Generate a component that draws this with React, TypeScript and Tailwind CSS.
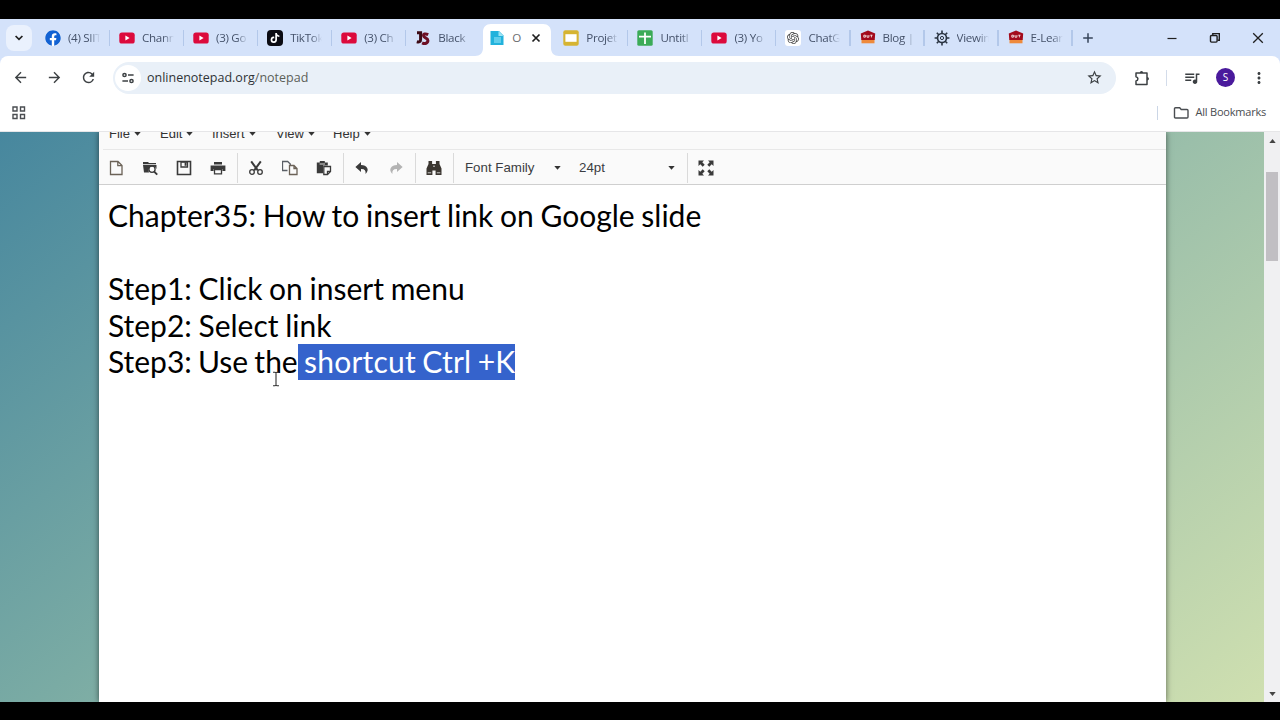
import React from "react";
import { FaFacebook, FaTiktok } from "react-icons/fa";
import { SiOpenai } from "react-icons/si";
import {
  MdArrowBack,
  MdArrowForward,
  MdMoreVert,
  MdQueueMusic,
  MdRefresh,
  MdStarBorder,
} from "react-icons/md";

const YouTube = () => (
  <svg width="16" height="16" viewBox="0 0 16 16">
    <rect x="0.3" y="2.6" width="15.4" height="11" rx="2.6" fill="#dc0a3c" />
    <path d="M6.4 5.6v5L10.6 8.1z" fill="#fff" />
  </svg>
);

const Facebook = () => (
  <span className="flex rounded-full bg-white">
    <FaFacebook size={16} color="#1262d3" />
  </span>
);

const TikTok = () => (
  <span className="flex size-4 items-center justify-center rounded-[4px] bg-[#0b0b12]">
    <FaTiktok size={10} color="#fff" />
  </span>
);

const Js = () => (
  <svg width="16" height="16" viewBox="0 0 16 16" fill="none" stroke="#6d0f24" strokeWidth="3">
    <path d="M2 2.8h3.600v6.700c0 2.400-1.600 2.800-3.800 2.200" stroke="#3c0b16" />
    <path d="M13.200 4.600c-3-1.400-5-.6-4.600 1.400.4 2 4.300 1.900 4.300 4.600 0 2.800-3 3.600-5.800 2.200" />
  </svg>
);

const NotepadIcon = () => (
  <svg width="16" height="16" viewBox="0 0 16 16">
    <path d="M1.500 1h8.500l4.500 4.500V15h-13z" fill="#22b2dc" />
    <path d="M9.500 1v5h5z" fill="#9be3f5" />
    <path d="M5 7h7v6H5z" fill="#5fcdeb" />
  </svg>
);

const Slides = () => (
  <svg width="16" height="16" viewBox="0 0 16 16">
    <rect x="0.3" y="0.3" width="15.4" height="15.4" rx="2" fill="#d6b432" />
    <rect x="2.4" y="4.2" width="11.2" height="7.6" fill="#fff" />
  </svg>
);

const Sheets = () => (
  <svg width="16" height="16" viewBox="0 0 16 16">
    <rect x="0.3" y="0.3" width="15.4" height="15.4" rx="1.5" fill="#3bab57" />
    <path d="M2 6.700h12M8 2.500v11.500" stroke="#fff" strokeWidth="1.8" />
  </svg>
);

const ChatGpt = () => (
  <span className="flex size-4 items-center justify-center rounded-[3px] bg-white">
    <SiOpenai size={12} color="#444" />
  </span>
);

const Badge = () => (
  <svg width="16" height="16" viewBox="0 0 16 16">
    <path d="M1.500 9h13v4.300h-13z" fill="#ee8a3c" />
    <path d="M.8 3.400 8 .4l7.200 3-.5 6.600H1.300z" fill="#a30a1c" />
    <path d="M3.800 5.200h1.600v2H3.800zM7 5v2.200h1.900V5M10.300 5.200h2.200M11.400 5.200v2.200" stroke="#fff" strokeWidth=".8" fill="none" />
  </svg>
);

const Wheel = () => (
  <svg width="16" height="16" viewBox="0 0 16 16" fill="none" stroke="#2a3442">
    <circle cx="8" cy="8" r="4.500" strokeWidth="1.700" />
    <circle cx="8" cy="8" r="1.600" strokeWidth="1" />
    <path d="M8 .6v3.200M8 12.200v3.200M.6 8h3.200M12.200 8h3.200M2.800 2.800 5 5M11 11l2.200 2.200M13.200 2.800 11 5M5 11l-2.200 2.200" strokeWidth="1.600" />
  </svg>
);

const tabs = [
  { icon: Facebook, title: "(4) SIIT" },
  { icon: YouTube, title: "Chann" },
  { icon: YouTube, title: "(3) Go" },
  { icon: TikTok, title: "TikTok" },
  { icon: YouTube, title: "(3) Ch" },
  { icon: Js, title: "Black", last: true },
  { icon: NotepadIcon, title: "O", active: true },
  { icon: Slides, title: "Projet" },
  { icon: Sheets, title: "Untitl" },
  { icon: YouTube, title: "(3) Yo" },
  { icon: ChatGpt, title: "ChatG" },
  { icon: Badge, title: "Blog |" },
  { icon: Wheel, title: "Viewin" },
  { icon: Badge, title: "E-Lear" },
];

const Tab = ({ icon: Icon, title, active, last }: any) =>
  active ? (
    <div className="relative flex h-full w-[74.05px] shrink-0 items-center pl-[9px]">
      <svg className="absolute bottom-0 -left-[5px]" width="84" height="32" viewBox="0 0 84 32">
        <path d="M0 32c5 0 8-3 8-8V8c0-5 3-8 8-8h52c5 0 8 3 8 8v16c0 5 3 8 8 8z" fill="#fff" />
      </svg>
      <span className="relative">
        <Icon />
      </span>
      <span className="relative ml-[7px] w-[9px] text-[#6a6d70]">{title}</span>
      <svg className="relative ml-[10px]" width="10" height="10" viewBox="0 0 10 10" stroke="#1f1f1f" strokeWidth="1.7">
        <path d="m1.5 1.5 7 7m0-7-7 7" />
      </svg>
    </div>
  ) : (
    <div className="flex h-full w-[74.05px] shrink-0 items-center pl-[9px]">
      <Icon />
      <span className="ml-[7px] w-[32px] overflow-hidden whitespace-nowrap text-[#45526a] mask-r-from-65%">{title}</span>
      {!last && <span className="ml-auto h-4 w-[1.5px] bg-[#b3c8ea]" />}
    </div>
  );

const TabStrip = () => (
  <div className="flex h-[37px] items-center bg-[#d4e2fa] pl-[6px] font-['Open_Sans','Noto_Sans',sans-serif] text-[11.6px] tracking-[-0.3px]">
    <div className="mr-[4px] flex h-[26px] w-[26px] shrink-0 items-center justify-center rounded-[8px] bg-[#eaf1fd]">
      <svg width="10" height="8" viewBox="0 0 10 8" fill="none" stroke="#1f1f1f" strokeWidth="1.7">
        <path d="m1.6 2 3.4 3.4L8.4 2" />
      </svg>
    </div>
    {tabs.map((tab, i) => (
      <Tab key={i} {...tab} />
    ))}
    <svg className="ml-[9px] shrink-0" width="12" height="12" viewBox="0 0 12 12" stroke="#36445a" strokeWidth="1.5">
      <path d="M6 1.2v9.6M1.2 6h9.6" />
    </svg>
    <div className="mr-[16px] ml-auto flex items-center gap-[31px]">
      <svg width="12" height="12" viewBox="0 0 12 12" stroke="#1f1f1f" strokeWidth="1.2">
        <path d="M1.5 6.5h9" />
      </svg>
      <svg width="12" height="12" viewBox="0 0 12 12" fill="none" stroke="#1f1f1f" strokeWidth="1.4">
        <rect x="1.5" y="3.5" width="6.6" height="6.6" rx="1" />
        <path d="M3.8 3.2V1.6h6.5v6.6H8.6" />
      </svg>
      <svg width="12" height="12" viewBox="0 0 12 12" stroke="#1f1f1f" strokeWidth="1.3">
        <path d="m1.2 1.2 9.6 9.6m0-9.6-9.6 9.6" />
      </svg>
    </div>
  </div>
);

const AddressBar = () => (
  <div className="bg-[#d4e2fa]">
    <div className="flex h-[43px] items-center rounded-t-[8px] bg-white pl-[12px] font-['Open_Sans','Noto_Sans',sans-serif] text-[#3c4043]">
      <MdArrowBack size={17} />
      <MdArrowForward size={17} className="ml-[17px]" />
      <MdRefresh size={17} className="ml-[17px]" />
      <div className="ml-[16px] flex h-[32px] w-[1003px] items-center rounded-full bg-[#e9f0f8] pl-[2px]">
        <span className="flex size-[26px] items-center justify-center rounded-full bg-white">
          <svg width="12" height="12" viewBox="0 0 12 12" fill="none" stroke="#3c4043" strokeWidth="1.5">
            <circle cx="2.5" cy="3" r="1.6" />
            <path d="M6 3h5.6M.4 9H6" />
            <circle cx="9.5" cy="9" r="1.6" />
          </svg>
        </span>
        <span className="mt-[2px] ml-[6px] text-[12.5px] text-[#2f3336]">
          onlinenotepad.org<span className="text-[#5c5f58]">/notepad</span>
        </span>
        <MdStarBorder size={17} className="mr-[13px] ml-auto" />
      </div>
      {/* extensions */}
      <svg className="ml-[17px]" width="18" height="18" viewBox="0 0 18 18" fill="none" stroke="#3c4043" strokeWidth="1.5">
        <path
          d="M3 4h11v11.500H3v-3.600q1.900-.3 1.900-2.100T3 7.700z"
          strokeLinejoin="round"
        />
        <path d="M6.800 4a1.700 2 0 0 1 3.400 0zM14 8a2 1.700 0 0 1 0 3.400z" fill="#3c4043" stroke="none" />
      </svg>
      <span className="ml-[15px] h-4 w-[1px] bg-[#d3dcea]" />
      <MdQueueMusic size={18} className="ml-[16px]" />
      <span className="ml-[15px] flex size-[19px] items-center justify-center rounded-full bg-[#4a1a9c] text-[10px] text-white">
        S
      </span>
      <MdMoreVert size={18} className="ml-[15px]" />
    </div>
  </div>
);

const BookmarksBar = () => (
  <div className="flex h-[33px] items-center border-b border-[#e6e6e8] bg-white pb-[5px] pl-[12px] font-['Open_Sans','Noto_Sans',sans-serif]">
    <svg width="14" height="14" viewBox="0 0 14 14" fill="none" stroke="#4a4d51" strokeWidth="1.4">
      <path d="M1 1h4v4H1zM8.500 1h4v4h-4zM1 8.500h4v4H1zM8.500 8.500h4v4h-4z" />
    </svg>
    <span className="ml-auto h-[14px] w-[1px] bg-[#cbd6e6]" />
    <svg className="ml-[15px]" width="17" height="14" viewBox="0 0 17 14" fill="none" stroke="#4a4d51" strokeWidth="1.4">
      <path d="M1.500 2.800q0-1 1-1h4.200l1.500 1.700h5.800q1 0 1 1v6.500q0 1-1 1H2.500q-1 0-1-1z" />
    </svg>
    <span className="mr-[14px] ml-[6px] text-[11px] tracking-[-0.22px] text-[#4a4d51]">All Bookmarks</span>
  </div>
);

const Caret = ({ className = "" }) => (
  <svg className={className} width="7" height="4" viewBox="0 0 7 4" fill="#333">
    <path d="M.3 0h6.400L3.500 3.800z" />
  </svg>
);

const MenuBar = () => (
  <div className="flex h-[17px] overflow-hidden text-[13px] leading-[16px] text-[#333]">
    {[
      ["File", "w-[51px]"],
      ["Edit", "w-[52px]"],
      ["Insert", "w-[64px]"],
      ["View", "w-[57px]"],
      ["Help", "w-[60px]"],
    ].map(([name, width]) => (
      <div key={name} className={`${width} -mt-[6px] flex h-[16px] shrink-0 items-center`}>
        {name}
        <Caret className="ml-[4px]" />
      </div>
    ))}
  </div>
);

const Separator = () => <span className="h-[30px] w-[1px] shrink-0 bg-[#dadada]" />;

const Tool = ({ children, className = "" }: any) => (
  <svg
    className={`shrink-0 ${className}`}
    width="16"
    height="16"
    viewBox="0 0 16 16"
    fill="none"
    stroke="#3a3a3a"
    strokeWidth="1.3"
  >
    {children}
  </svg>
);

const EditorToolbar = () => (
  <div className="flex h-[35px] items-center border-b border-[#cfcfcf] pt-[2px] pl-[9px] text-[13.3px] text-[#3a3d42]">
    <Tool>
      <path d="M2.500 1.500h7.500l4 4v9H2.500zM9.800 1.500v4.200H14" stroke="#6b6257" />
    </Tool>
    <Tool className="ml-[18px]">
      <path d="M1 2h5l1 1h7v1.200H1zM1 5h13.500v4A4 4 0 0 0 7 12.500H2z" fill="#3a3a3a" stroke="none" />
      <circle cx="10" cy="9.300" r="3.100" fill="#fafafa" />
      <path d="m12.200 11.600 3 3" strokeWidth="2" />
    </Tool>
    <Tool className="ml-[18px]">
      <path d="M1.500 1.500h13v13h-13z" strokeWidth="1.600" />
      <path d="M5 2h6.500v5H5z" />
      <path d="M8.600 2.400h2v3.400h-2z" fill="#3a3a3a" stroke="none" />
    </Tool>
    <Tool className="ml-[18px]">
      <path d="M4 2h8v2.600H4zM.6 5.500h14.800V11h-3V9H3.600v2h-3z" fill="#3a3a3a" stroke="none" />
      <path d="M4.500 9.500h7v4.400h-7z" />
    </Tool>
    <span className="ml-[11px]" />
    <Separator />
    <Tool className="ml-[10px]">
      <path d="m3.200 1.400 6.600 9M12.800 1.400l-6.600 9" strokeWidth="2" />
      <circle cx="4" cy="12" r="2.300" />
      <circle cx="12" cy="12" r="2.300" />
    </Tool>
    <Tool className="ml-[18px]">
      <path d="M5.500 10.500h-5v-9h5.200l2.600 2.600v2" stroke="#5a5f66" />
      <path d="M7.500 5.500H12l3 3v6H7.500zM12 5.500v3h3" stroke="#6b6257" />
    </Tool>
    <Tool className="ml-[18px]">
      <path d="M.8 2.400h3V1h5v1.400h3v3.200H7v7.600H.8z" fill="#3a3a3a" stroke="none" />
      <path d="M3.600 4h5.400" stroke="#d9d9d9" strokeWidth="1" />
      <path d="M7.800 6.500h6.700v5l-3 3H7.800zM11.500 14.400v-3h3" />
    </Tool>
    <span className="ml-[11px]" />
    <Separator />
    <Tool className="ml-[10px]">
      <path d="M7 2 1.400 7 7 12V9c3.400-.3 5 1.400 4.600 5C16 9.600 13 5.200 7 5z" fill="#3a3a3a" stroke="none" />
    </Tool>
    <Tool className="ml-[18px]">
      <path d="m9 2 5.600 5L9 12V9c-3.400-.3-5 1.400-4.600 5C0 9.600 3 5.200 9 5z" fill="#b3b3b3" stroke="none" />
    </Tool>
    <span className="ml-[11px]" />
    <Separator />
    <Tool className="ml-[10px]">
      <path d="M2.500 1h3.600v3h3.800V1h3.600v3l2 4.500V15H9.600v-4.500H6.400V15H.5V8.500l2-4.500z" fill="#3b3630" stroke="none" />
      <path d="M7 6.200h2M1.700 12.800h3.500M10.800 12.800h3.500" stroke="#ddd" strokeWidth="0.9" />
    </Tool>
    <span className="ml-[11px]" />
    <Separator />
    <span className="ml-[11px] w-[89px] whitespace-nowrap">Font Family</span>
    <Caret />
    <span className="ml-[18px] w-[89px]">24pt</span>
    <Caret />
    <span className="ml-[12px]" />
    <Separator />
    <Tool className="ml-[10px]">
      <path
        d="M.5.500H6L4.300 2.300l2.400 2.400-2 2-2.400-2.400L.5 6zM15.500.500V6l-1.800-1.700-2.400 2.400-2-2 2.400-2.400L10 .500zM.5 15.500V10l1.800 1.700 2.400-2.400 2 2-2.400 2.400L6 15.500zM15.500 15.500H10l1.700-1.800-2.400-2.400 2-2 2.400 2.400L15.500 10z"
        fill="#3a3a3a"
        stroke="none"
      />
    </Tool>
  </div>
);

const Editor = () => (
  <div className="flex w-[1067px] shrink-0 flex-col bg-white font-['Liberation_Sans',Arial,sans-serif] shadow-[0_0_6px_rgba(0,0,0,0.55)]">
    <div className="bg-[#fafafa]">
      <div className="pl-[10px]">
        <MenuBar />
      </div>
      <div className="ml-[4px] h-[1px] bg-[#e8e8e8]" />
      <EditorToolbar />
    </div>
    <div className="pt-[12px] pl-[9px] font-[Lato,sans-serif] text-[30px] leading-[36.5px] [word-spacing:-1px] whitespace-pre text-black">
      <p>Chapter35: How to insert link on Google slide</p>
      <p> </p>
      <p>Step1: Click on insert menu</p>
      <p>Step2: Select link</p>
      <p className="[word-spacing:-1.5px]">
        Step3: Use the
        <span className="bg-[linear-gradient(transparent_1px,#3563cc_1px)] pb-px tracking-[0.2px] text-white">
          {" shortcut Ctrl +K"}
        </span>
      </p>
    </div>
  </div>
);

const ScrollBar = () => (
  <div className="ml-auto flex w-[16px] flex-col items-center bg-[#f0f0f2]">
    <svg className="mt-[7px]" width="7" height="4" viewBox="0 0 8 5" fill="#444">
      <path d="M0 5h8L4 0z" />
    </svg>
    <div className="mt-[29px] h-[89px] w-[12px] bg-[#c1bfc3]" />
    <svg className="mt-auto mb-[6px]" width="7" height="4" viewBox="0 0 8 5" fill="#444">
      <path d="M0 0h8L4 5z" />
    </svg>
  </div>
);

const App = () => (
  <div className="relative h-[720px] w-[1280px] overflow-hidden bg-black pt-[19px]">
    <TabStrip />
    <AddressBar />
    <BookmarksBar />
    <div className="flex h-[570px] overflow-hidden bg-[linear-gradient(142deg,#47879e_0%,#7aaba4_38%,#9bbfaa_60%,#d0e0b0_100%)] pl-[99px]">
      <Editor />
      <ScrollBar />
    </div>
    {/* text cursor */}
    <svg className="absolute top-[371px] left-[272px]" width="8" height="16" viewBox="0 0 8 16" fill="none" stroke="#333" strokeWidth="1.1">
      <path d="M1 1.200h2l1 .8 1-.8h2M4 2v12M1 14.800h2l1-.8 1 .8h2" />
    </svg>
  </div>
);

export default App;
